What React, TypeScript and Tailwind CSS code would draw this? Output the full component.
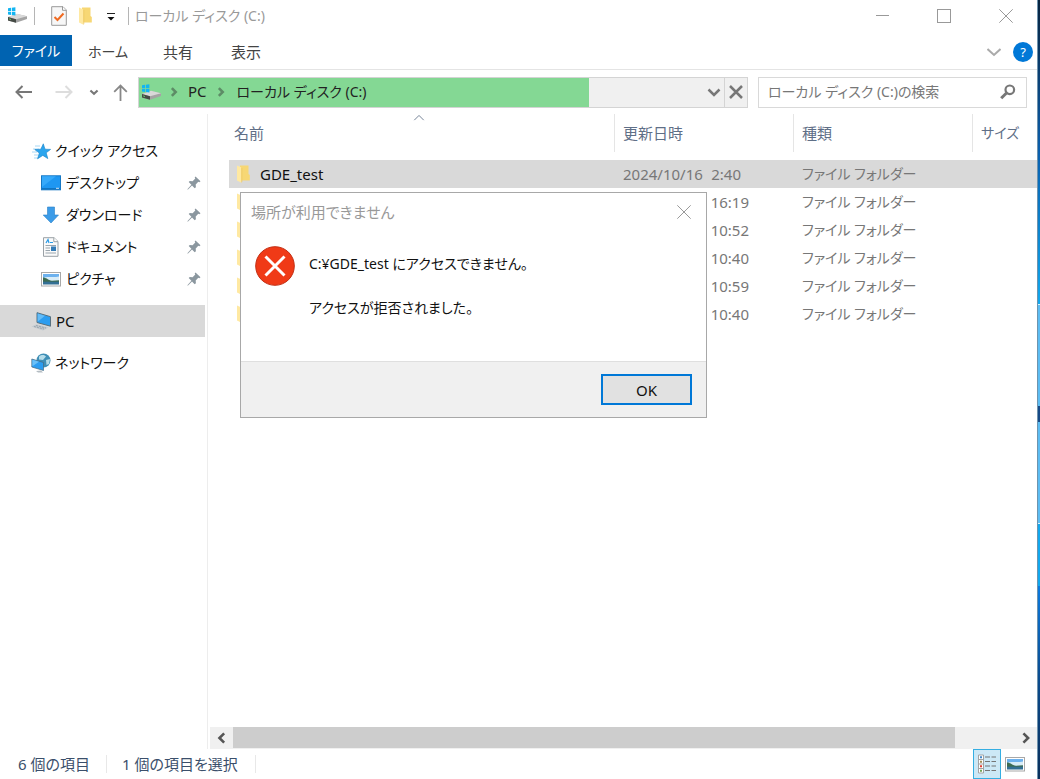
import type { ReactNode } from 'react'

const QUICK_ACCESS: { label: string; icon: ReactNode }[] = [
  { label: 'デスクトップ', icon: <DesktopIcon /> },
  { label: 'ダウンロード', icon: <DownloadIcon /> },
  { label: 'ドキュメント', icon: <DocumentIcon /> },
  { label: 'ピクチャ', icon: <PictureIcon /> },
]

// Names and dates behind the dialog are covered, only the time shows.
const ROWS: { name: string; date: string; time: string }[] = [
  { name: 'GDE_test', date: '2024/10/16', time: '2:40' },
  { name: '', date: '', time: '16:19' },
  { name: '', date: '', time: '10:52' },
  { name: '', date: '', time: '10:40' },
  { name: '', date: '', time: '10:59' },
  { name: '', date: '', time: '10:40' },
]

function DriveIcon() {
  return (
    <svg viewBox="0 0 21 17" className="h-[17px] w-[21px] shrink-0" aria-hidden="true">
      <path d="M1 10 10 7 20 9.2V12L9 15.8 1 13.5Z" fill="#a4a4a4" />
      <path d="M1 10 10 6.8 20 9.2 9 12.2Z" fill="#d9d9d9" />
      <path d="M1 10 9 12.2V15.8L1 13.5Z" fill="#454a45" />
      <path d="M2 11.5 4 12.1V12.9L2 12.3Z" fill="#6fd06f" />
      <path d="M1 1.2 4 .8V4H1ZM4.8.7 8.4.2V4H4.8ZM1 4.8H4V8L1 7.6ZM4.8 4.8H8.4V8.5L4.8 8Z" fill="#12b5f2" />
    </svg>
  )
}

function FolderIcon() {
  return (
    <svg viewBox="0 0 13 18" className="h-[18px] w-[13px] shrink-0" aria-hidden="true">
      <path d="M3 .5H11.5V9L12.8 10V15.5H3Z" fill="#f7d774" />
      <path d="M0 .5 4.5 2.5V17.8L0 15.5Z" fill="#ffe9a2" />
      <path d="M4.5 2.5V17.8L5.2 17V3Z" fill="#e9c25a" />
    </svg>
  )
}

function CheckDocIcon() {
  return (
    <svg viewBox="0 0 16 20" className="h-5 w-4" aria-hidden="true">
      <path d="M.7.7H12L15.3 4V19.3H.7Z" fill="#f7f7f7" stroke="#999" />
      <path d="M11.5.7V4.3H15.3" fill="#fff" stroke="#999" />
      <path d="M3.5 11 6.5 14 12.5 7.5" fill="none" stroke="#ef6a22" strokeWidth="2" />
    </svg>
  )
}

function StarIcon() {
  return (
    <svg viewBox="0 0 19 17" className="h-[17px] w-[19px]" aria-hidden="true">
      <path d="M3 3H8M1 6H7M0 9H5M2 12H6M2 15H6" stroke="#a8d8f5" strokeWidth="1" />
      <path d="M11.3.8 13 6.2 18.6 6.4 14.2 9.8 15.8 15.6 10.8 12.4 5.6 15.8 7.3 10 2.8 6.6 8.8 6.2Z" fill="#2ba5ee" stroke="#1582c8" strokeWidth=".6" />
    </svg>
  )
}

function DesktopIcon() {
  return (
    <svg viewBox="0 0 20 16" className="h-4 w-5" aria-hidden="true">
      <rect x=".5" y=".8" width="19" height="14" fill="#1e97f2" stroke="#1577c4" />
      <path d="M1 12 15 1.3H1Z" fill="#36a9fa" />
      <path d="M1 13.8H19" stroke="#0b67b0" />
      <path d="M15 13.3H18" stroke="#fff" strokeWidth=".8" />
    </svg>
  )
}

function DownloadIcon() {
  return (
    <svg viewBox="0 0 20 20" className="h-5 w-5" aria-hidden="true">
      <path d="M6.5 2H13.5V10H17.5L10 18 2.2 10H6.5Z" fill="#3c9ce8" stroke="#2a7fc6" strokeWidth=".6" />
    </svg>
  )
}

function DocumentIcon() {
  return (
    <svg viewBox="0 0 20 20" className="h-5 w-5" aria-hidden="true">
      <path d="M2.5.7H13L17 4.5V19.3H2.5Z" fill="#fafafa" stroke="#9aa1a6" />
      <path d="M12.8.7V4.7H17" fill="#fff" stroke="#9aa1a6" />
      <path d="M5 6 7 2.5 8 6M9 5.5H12" fill="none" stroke="#2b9be6" strokeWidth="1.2" />
      <path d="M4.5 8.5H15M4.5 11H9M4.5 13.5H9M4.5 16H15" stroke="#9aa5ad" />
      <rect x="10" y="9.5" width="5" height="4.5" fill="#357bb5" />
    </svg>
  )
}

function PictureIcon() {
  return (
    <svg viewBox="0 0 20 15" className="h-[15px] w-5" aria-hidden="true">
      <rect x=".5" y=".5" width="19" height="13.5" fill="#fff" stroke="#a8a8a8" />
      <rect x="2" y="2" width="16" height="5" fill="#6cb1ee" />
      <path d="M2 6C7 4 12 6 18 4.5V9H2Z" fill="#d8ecf7" />
      <path d="M2 5.5C5 5.5 7 8 11 8.8L18 8.2V10H2Z" fill="#3c6b52" />
      <rect x="2" y="9.7" width="16" height="2.8" fill="#336f94" />
    </svg>
  )
}

function PcIcon() {
  return (
    <svg viewBox="0 0 21 19" className="h-[19px] w-[21px]" aria-hidden="true">
      <path d="M6 .7 19.5 4.7V14.2L6 10.5Z" fill="#2c9df0" stroke="#56707f" />
      <path d="M6.6 1.5 14 3.8 6.6 9.8Z" fill="#64bcf7" />
      <path d="M.5 14.5 5.5 12.2 17.5 15.5 12 18.5Z" fill="#c3cad0" />
      <path d="M3 14.5 13 17M5 13.5 15 16" stroke="#88939c" strokeWidth=".7" strokeDasharray="2 1" />
    </svg>
  )
}

function NetworkIcon() {
  return (
    <svg viewBox="0 0 20 20" className="h-5 w-5" aria-hidden="true">
      <circle cx="12.5" cy="7.5" r="7" fill="#3f8fb6" />
      <path d="M8 3.5C11 1 14 2 15 3.5L12 7 8 6.5ZM15 7 19 6 18 11 15.5 12Z" fill="#b5dce9" />
      <path d="M.8 6 12.5 9.5V17.5L.8 14Z" fill="#2b9cf0" stroke="#47687c" strokeWidth=".7" />
      <path d="M1.4 6.8 8 8.8 1.4 13.2Z" fill="#69c0f8" />
      <path d="M5 18 10 17.5 12 19.5H7Z" fill="#b4bcc2" />
    </svg>
  )
}

function PinIcon() {
  return (
    <svg viewBox="0 0 14 14" className="h-3.5 w-3.5" aria-hidden="true">
      <path d="M8.5.5 13.5 5.3 12.4 6.2 11.3 5.8 8.7 8.5 8.9 11.3 7.7 12.2 5 9.4 1 13.4.3 13.6.6 12.9 4.4 8.8 1.7 6 2.8 5 5.6 5.2 8.3 2.6 7.7 1.4Z" fill="#8b979f" />
    </svg>
  )
}

function DetailsIcon() {
  return (
    <svg viewBox="0 0 20 20" className="h-5 w-5" aria-hidden="true">
      <path d="M1.5 1H6.5V19H1.5ZM1.5 5.5H6.5M1.5 10H6.5M1.5 14.5H6.5" fill="#fff" stroke="#a3a3a3" />
      <path d="M3 3.3H5" stroke="#3f86c8" strokeWidth="2" />
      <path d="M3 7.8H5" stroke="#a18a55" strokeWidth="2" />
      <path d="M3 12.2H5" stroke="#e03c31" strokeWidth="2" />
      <path d="M3 16.8H5" stroke="#6fa455" strokeWidth="2" />
      <path d="M8 3H13M14.5 3H19M8 7.5H13M14.5 7.5H19M8 12H13M14.5 12H19M8 16.5H13M14.5 16.5H19" stroke="#757575" />
    </svg>
  )
}

function Chevron({ d, className }: { d: string; className: string }) {
  return (
    <svg viewBox="0 0 14 14" fill="none" stroke="currentColor" className={className} aria-hidden="true">
      <path d={d} />
    </svg>
  )
}

function CloseIcon() {
  return (
    <svg viewBox="0 0 14 14" className="h-3.5 w-3.5" fill="none" stroke="currentColor" aria-hidden="true">
      <path d="M.3.3 13.7 13.7M13.7.3.3 13.7" />
    </svg>
  )
}

function TitleBar() {
  return (
    <div className="flex h-[35px] items-center pb-1">
      <div className="flex flex-1 items-center pl-[7px]">
        <DriveIcon />
        <span className="mr-4 ml-1.5 h-[18px] w-px bg-[#b5b5b5]" />
        <button type="button" aria-label="プロパティ">
          <CheckDocIcon />
        </button>
        <button type="button" aria-label="新しいフォルダー" className="ml-3">
          <FolderIcon />
        </button>
        <button type="button" aria-label="クイック アクセス ツール バーのカスタマイズ" className="ml-3.5">
          <svg viewBox="0 0 10 10" className="h-2.5 w-2.5" aria-hidden="true">
            <path d="M1 2.5H9" stroke="#222" />
            <path d="M1.5 6H8.5L5 9.5Z" fill="#111" />
          </svg>
        </button>
        <span className="mr-1.5 ml-3 h-[18px] w-px bg-[#b5b5b5]" />
        <h1 className="text-sm text-[#999]">ローカル ディスク (C:)</h1>
      </div>
      <div className="flex text-[#999]">
        <button type="button" aria-label="最小化" className="flex h-[31px] w-[62px] items-center justify-center">
          <span className="h-px w-[13px] bg-[#999]" />
        </button>
        <button type="button" aria-label="最大化" className="flex h-[31px] w-[62px] items-center justify-center">
          <span className="h-3.5 w-3.5 border border-[#999]" />
        </button>
        <button type="button" aria-label="閉じる" className="flex h-[31px] w-[62px] items-center justify-center">
          <CloseIcon />
        </button>
      </div>
    </div>
  )
}

function RibbonTabs() {
  return (
    <div className="flex h-[35px] items-start border-b border-[#e4e4e4] text-[#444]">
      <button type="button" className="h-[31px] w-[72px] bg-[#0063b1] text-sm text-white">ファイル</button>
      <button type="button" className="h-[34px] w-[72px] text-sm">ホーム</button>
      <button type="button" className="h-[34px] w-[68px]">共有</button>
      <button type="button" className="h-[34px] w-[68px]">表示</button>
      <div className="ml-auto flex h-[34px] items-center gap-3 pr-1">
        <button type="button" aria-label="リボンの展開" className="text-[#aaa]">
          <Chevron d="M.5 4 7 10 13.5 4" className="h-3.5 w-3.5 stroke-2" />
        </button>
        <button type="button" aria-label="ヘルプ" className="flex h-5 w-5 items-center justify-center rounded-full bg-[#0078d7] text-[13px] leading-5 text-white">
          ?
        </button>
      </div>
    </div>
  )
}

function AddressRow() {
  return (
    <div className="flex h-11 items-center pr-2.5 text-sm text-[#777]">
      <div className="flex w-[138px] shrink-0 items-center pl-[15px]">
        <button type="button" aria-label="戻る">
          <svg viewBox="0 0 18 14" className="h-3.5 w-[18px]" fill="none" stroke="#777" strokeWidth="2" aria-hidden="true">
            <path d="M17 7H1.5M7.5 1 1.5 7 7.5 13" />
          </svg>
        </button>
        <button type="button" aria-label="進む" disabled className="ml-[22px]">
          <svg viewBox="0 0 18 14" className="h-3.5 w-[18px]" fill="none" stroke="#ddd" strokeWidth="2" aria-hidden="true">
            <path d="M.5 7H16.5M10.5 1 16.5 7 10.5 13" />
          </svg>
        </button>
        <button type="button" aria-label="最近表示した場所" className="ml-4">
          <Chevron d="M2 5 7 9.5 12 5" className="h-2.5 w-2.5 stroke-[3]" />
        </button>
        <button type="button" aria-label="上へ" className="ml-3.5">
          <svg viewBox="0 0 15 17" className="h-[17px] w-[15px]" fill="none" stroke="#888" strokeWidth="1.8" aria-hidden="true">
            <path d="M7.5 17V1.5M1.2 7.8 7.5 1.5 13.8 7.8" />
          </svg>
        </button>
      </div>
      <div className="flex h-[31px] min-w-0 flex-1 border border-[#d4d4d4] bg-[#f0f0f0]">
        <div className="flex w-[74%] items-center bg-[#84d894] pl-0.5 text-[#222]">
          <DriveIcon />
          <Chevron d="M4.5 2.5 9 7 4.5 11.5" className="ml-1.5 h-3 w-3 stroke-3 text-[#5d8c66]" />
          <a href="#pc" className="ml-2 text-[15px]">PC</a>
          <Chevron d="M4.5 2.5 9 7 4.5 11.5" className="ml-2 h-3 w-3 stroke-3 text-[#5d8c66]" />
          <a href="#c" className="ml-2.5 whitespace-nowrap">ローカル ディスク (C:)</a>
        </div>
        <div className="flex flex-1 items-center justify-end">
          <button type="button" aria-label="以前の場所" className="mr-0.5 p-px">
            <Chevron d="M1.5 4.5 7 10 12.5 4.5" className="h-3.5 w-3.5 stroke-[2.5]" />
          </button>
          <button type="button" aria-label="中止" className="flex h-full w-[23px] items-center justify-center border-l border-[#d4d4d4]">
            <Chevron d="M1 1 13 13M13 1 1 13" className="h-3.5 w-3.5 stroke-[2.5]" />
          </button>
        </div>
      </div>
      <div className="ml-2.5 flex h-[31px] w-[269px] items-center border border-[#d9d9d9] pr-2.5 pl-[9px]">
        <input
          type="search"
          aria-label="ローカル ディスク (C:)の検索"
          placeholder="ローカル ディスク (C:)の検索"
          className="min-w-0 flex-1 outline-none placeholder:text-[#777]"
        />
        <svg viewBox="0 0 16 16" className="h-4 w-4" fill="none" stroke="#777" aria-hidden="true">
          <circle cx="9.8" cy="5.8" r="4.3" strokeWidth="2.2" />
          <path d="M6.5 9 1.2 14.2" strokeWidth="3" />
        </svg>
      </div>
    </div>
  )
}

function Sidebar() {
  return (
    <nav className="w-52 shrink-0 border-r border-[#ededed] pt-[21px] pr-0.5 text-sm leading-6 text-[#111]">
      <a href="#quick" className="flex h-8 items-center gap-1 pl-8">
        <StarIcon />
        クイック アクセス
      </a>
      <ul>
        {QUICK_ACCESS.map((item) => (
          <li key={item.label}>
            <a href="#folder" className="flex h-8 items-center gap-[5px] pr-1 pl-[41px]">
              {item.icon}
              <span className="flex-1">{item.label}</span>
              <PinIcon />
            </a>
          </li>
        ))}
      </ul>
      <a href="#pc" className="mt-2.5 flex h-8 items-center gap-1 bg-[#d9d9d9] pl-[31px] text-[15px]">
        <PcIcon />
        PC
      </a>
      <a href="#network" className="mt-2.5 flex h-8 items-center gap-1 pl-[31px]">
        <NetworkIcon />
        ネットワーク
      </a>
    </nav>
  )
}

function FileTable() {
  return (
    <table className="w-full table-fixed text-left text-[#777]">
      <thead className="text-[#5f6f87]">
        <tr className="h-[46px] align-top">
          <th className="relative w-[385px] p-0 font-normal">
            <Chevron d="M1.5 9.5 7 4 12.5 9.5" className="absolute -top-0.5 left-46 h-3 w-3" />
            <div className="flex h-[38px] items-center pl-[5px]">名前</div>
          </th>
          <th className="w-[179px] p-0 font-normal">
            <div className="flex h-[38px] items-center border-l border-[#e5e5e5] pl-2">更新日時</div>
          </th>
          <th className="w-[179px] p-0 font-normal">
            <div className="flex h-[38px] items-center border-l border-[#e5e5e5] pl-2">種類</div>
          </th>
          <th className="p-0 font-normal">
            <div className="flex h-[38px] items-center border-l border-[#e5e5e5] pl-2 text-sm">サイズ</div>
          </th>
        </tr>
      </thead>
      <tbody>
        {ROWS.map((row, i) => (
          <tr key={i} className={i === 0 ? 'h-7 bg-[#d9d9d9]' : 'h-7'}>
            <td className="p-0 pl-2">
              <div className="flex items-center gap-2.5 text-[#111]">
                <FolderIcon />
                {row.name}
              </div>
            </td>
            <td className="p-0 pl-[9px]">
              <div className="flex w-[126px] justify-between">
                <span>{row.date}</span>
                <span className={i === 0 ? 'mr-2' : ''}>{row.time}</span>
              </div>
            </td>
            <td className="p-0 pl-[9px] text-sm">ファイル フォルダー</td>
            <td className="p-0" />
          </tr>
        ))}
      </tbody>
    </table>
  )
}

function ErrorDialog() {
  return (
    <div
      role="alertdialog"
      aria-labelledby="dialog-title"
      className="absolute top-[78px] left-8 w-[467px] border border-[#a8a8a8] bg-white text-[#111]"
    >
      <div className="flex h-[38px] items-center justify-between pr-[15px] pl-2.5 text-[#999]">
        <h2 id="dialog-title">場所が利用できません</h2>
        <button type="button" aria-label="閉じる">
          <CloseIcon />
        </button>
      </div>
      <div className="flex h-[130px] items-start gap-3.5 pt-[15px] pl-3.5">
        <svg viewBox="0 0 40 40" className="h-10 w-10" aria-hidden="true">
          <circle cx="20" cy="20" r="19.3" fill="#f03a17" stroke="#c22f14" />
          <path d="M10.5 10.5 29.5 29.5M29.5 10.5 10.5 29.5" stroke="#fff" strokeWidth="3" />
        </svg>
        <div className="flex flex-col gap-5 pt-1.5 text-sm leading-6">
          <p>C:¥GDE_test にアクセスできません。</p>
          <p>アクセスが拒否されました。</p>
        </div>
      </div>
      <div className="flex h-14 items-center justify-end border-t border-[#dfdfdf] bg-[#f0f0f0] pr-3.5">
        <button type="button" className="h-[31px] w-[91px] border-2 border-[#0078d7] bg-[#e1e1e1]">OK</button>
      </div>
    </div>
  )
}

function HorizontalScroll() {
  return (
    <div className="ml-0.5 flex h-[22px] bg-[#f0f0f0] text-[#555]">
      <button type="button" aria-label="左へスクロール" className="flex w-[23px] items-center justify-center">
        <Chevron d="M9.5 1.5 4 7 9.5 12.5" className="h-3 w-3 stroke-3" />
      </button>
      <div className="flex-1">
        <div className="h-[21px] w-[92.5%] bg-[#cdcdcd]" />
      </div>
      <button type="button" aria-label="右へスクロール" className="flex w-[23px] items-center justify-center">
        <Chevron d="M4 1.5 9.5 7 4 12.5" className="h-3 w-3 stroke-3" />
      </button>
    </div>
  )
}

function StatusBar() {
  return (
    <footer className="flex h-[30px] items-center pr-3 pl-[18px] text-[#3b4f6b]">
      <span className="w-[88px]">6 個の項目</span>
      <span className="h-[18px] w-px bg-[#e8e8e8]" />
      <span className="w-[148px] pl-[15px]">1 個の項目を選択</span>
      <span className="h-[18px] w-px bg-[#e8e8e8]" />
      <div className="ml-auto flex items-center gap-1">
        <button type="button" aria-label="詳細" className="flex h-[30px] w-7 items-center justify-center border border-[#35aee2] bg-[#cce8f6]">
          <DetailsIcon />
        </button>
        <button type="button" aria-label="大アイコン">
          <PictureIcon />
        </button>
      </div>
    </footer>
  )
}

export default function App() {
  return (
    <div className="flex h-screen bg-white font-['Noto_Sans','Noto_Sans_CJK_JP',sans-serif] text-[15px] leading-6 [font-feature-settings:'palt']">
      <div className="flex min-w-0 flex-1 flex-col">
        <TitleBar />
        <RibbonTabs />
        <AddressRow />
        <div className="flex min-h-0 flex-1">
          <Sidebar />
          <main className="relative flex min-w-0 flex-1 flex-col">
            <div className="flex-1 pl-[21px]">
              <FileTable />
            </div>
            <HorizontalScroll />
            <ErrorDialog />
          </main>
        </div>
        <StatusBar />
      </div>
      {/* Sliver of the desktop wallpaper past the window edge */}
      <div className="flex w-[3px] flex-col border-l border-[#6f93ad]">
        <div className="h-[39%] bg-linear-to-b from-[#07233f] via-[#0a5fae] to-[#12a8ee]" />
        <div className="h-px bg-[#d5f4ff]" />
        <div className="h-[13%] bg-[#5cbcf2]" />
        <div className="h-[2%] bg-[#174a86]" />
        <div className="h-[13%] bg-[#5cbcf2]" />
        <div className="h-px bg-[#d5f4ff]" />
        <div className="h-[8%] bg-[#12a8ee]" />
        <div className="flex-1 bg-linear-to-b from-[#0a7ae0] via-[#0a4a8c] to-[#0a2f5a]" />
      </div>
    </div>
  )
}
